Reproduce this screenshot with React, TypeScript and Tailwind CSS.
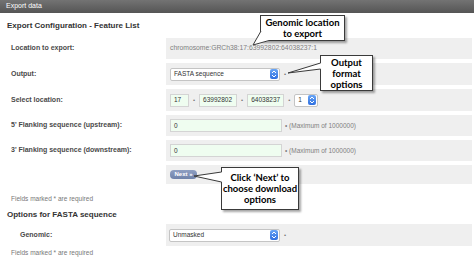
import React from "react";

const Stepper = () => (
  <span className="ml-auto mr-[1px] flex h-[10px] w-[8px] items-center justify-center rounded-[2px] bg-gradient-to-b from-[#6aa6f5] to-[#2f6fe0]">
    <svg width="6" height="8" viewBox="0 0 6 8">
      <path d="M1 3 L3 1 L5 3 M1 5 L3 7 L5 5" stroke="white" strokeWidth="1" fill="none" />
    </svg>
  </span>
);

const Select = ({ value, width }: { value: string; width: string }) => (
  <div className={`flex h-[13px] items-center rounded-[2px] border border-[#c4c4c4] bg-white pl-[3px] text-[6.5px] text-[#333] ${width}`}>
    <span>{value}</span>
    <Stepper />
  </div>
);

const Input = ({ value, width }: { value: string; width: string }) => (
  <div className={`flex h-[13px] items-center border border-[#d4d4d4] bg-[#effdf0] pl-[3px] text-[6.5px] text-[#333] ${width}`}>
    {value}
  </div>
);

const Dot = () => <span className="mx-[4px] text-[6px] text-[#777]">•</span>;

const Row = ({ label, h, children }: { label: string; h: string; children?: React.ReactNode }) => (
  <div className={`flex ${h}`}>
    <div className="flex w-[166px] items-center pl-[11px] text-[7px] font-bold text-[#4a4a4a]">{label}</div>
    <div className="flex w-[306px] items-center bg-[#efefef] pl-[4px]">{children}</div>
  </div>
);

const Tail = ({ fill, line }: { fill: string; line: string }) => (
  <svg className="pointer-events-none absolute left-0 top-0" width="474" height="262">
    <polygon points={fill} fill="white" />
    <polyline points={line} fill="none" stroke="#3a3a3a" strokeWidth="1" />
  </svg>
);

const Callout = ({ className, lines }: { className: string; lines: string[] }) => (
  <div
    className={`absolute flex flex-col items-center justify-center border border-[#3a3a3a] bg-white font-['Lato',sans-serif] text-[9.5px] font-bold leading-[11px] text-black shadow-[2px_2px_2px_rgba(0,0,0,0.35)] ${className}`}
  >
    {lines.map((l) => (
      <span key={l}>{l}</span>
    ))}
  </div>
);

export default function App() {
  return (
    <div className="relative h-[262px] w-[474px] overflow-hidden bg-white font-['Liberation_Sans',Arial,sans-serif]">
      {/* Header */}
      <div className="flex h-[13px] items-center bg-gradient-to-b from-[#737373] to-[#555] px-[6px] text-[7px] text-white">
        Export data
      </div>

      <div className="flex h-[25px] items-center px-[7px] text-[8px] font-bold text-[#333]">
        Export Configuration - Feature List
      </div>

      <div className="flex flex-col gap-[4px]">
        <Row label="Location to export:" h="h-[21px]">
          <span className="text-[6.8px] text-[#808080]">chromosome:GRCh38:17:63992802:64038237:1</span>
        </Row>
        <Row label="Output:" h="h-[22px]">
          <Select value="FASTA sequence" width="w-[110px]" />
          <Dot />
        </Row>
        <Row label="Select location:" h="h-[22px]">
          <Input value="17" width="w-[19px]" />
          <Dot />
          <Input value="63992802" width="w-[38px]" />
          <Dot />
          <Input value="64038237" width="w-[37px]" />
          <Dot />
          <Select value="1" width="w-[24px]" />
        </Row>
        <Row label="5' Flanking sequence (upstream):" h="h-[21px]">
          <Input value="0" width="w-[112px]" />
          <span className="ml-[3px] text-[6.5px] text-[#808080]">• (Maximum of 1000000)</span>
        </Row>
        <Row label="3' Flanking sequence (downstream):" h="h-[21px]">
          <Input value="0" width="w-[112px]" />
          <span className="ml-[3px] text-[6.5px] text-[#808080]">• (Maximum of 1000000)</span>
        </Row>
        <Row label="" h="h-[19px]">
          <div className="flex h-[9px] w-[27px] items-center justify-center rounded-[4px] bg-gradient-to-b from-[#8e9fc2] to-[#6f82aa] text-[6px] font-bold text-white">
            Next »
          </div>
        </Row>
      </div>

      <div className="mt-[8px] h-[14px] pl-[11px] text-[6.5px] leading-[14px] text-[#777]">Fields marked * are required</div>
      <div className="h-[18px] pl-[7px] text-[8px] font-bold leading-[18px] text-[#333]">Options for FASTA sequence</div>

      <div className="flex h-[22px]">
        <div className="flex w-[166px] items-center pl-[20px] text-[7px] font-bold text-[#4a4a4a]">Genomic:</div>
        <div className="flex w-[306px] items-center bg-[#efefef] pl-[3px]">
          <Select value="Unmasked" width="w-[111px]" />
          <Dot />
        </div>
      </div>
      <div className="h-[14px] pl-[11px] text-[6.5px] leading-[14px] text-[#777]">Fields marked * are required</div>

      {/* Annotations */}
      <Callout className="left-[260px] top-[15px] h-[26px] w-[85px]" lines={["Genomic location", "to export"]} />
      <Tail fill="261,31 253,45 269,41 269,39 261,39" line="261,31 253,45 269,40.5" />

      <Callout className="left-[320px] top-[55px] h-[36px] w-[53px]" lines={["Output", "format", "options"]} />
      <Tail fill="321,63 288,73 321,69" line="320.5,63 288,73 320.5,69" />

      <Callout className="left-[221px] top-[167px] h-[43px] w-[78px]" lines={["Click ‘Next’ to", "choose download", "options"]} />
      <Tail fill="222,172 194,176 222,182" line="221.5,172 194,176 221.5,182" />
    </div>
  );
}
